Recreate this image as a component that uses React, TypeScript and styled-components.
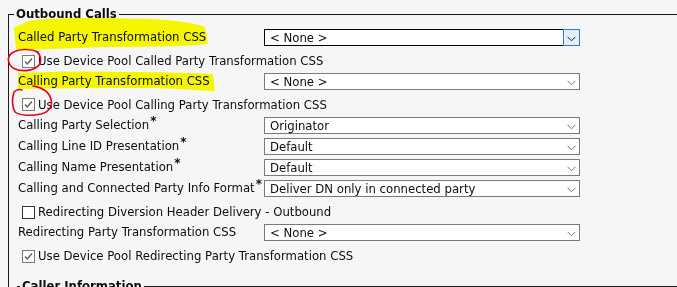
import styled, { createGlobalStyle } from "styled-components";

const Global = createGlobalStyle`
	html, body {
		margin: 0;
		background: #f6f6f6;
		overflow: hidden;
	}
	body {
		font-family: "DejaVu Sans", Verdana, sans-serif;
		font-size: 11.7px;
		color: #0d0d0d;
	}
`;

const Page = styled.div`
	position: relative;
	height: 287px;
	padding-top: 7px;
	box-sizing: border-box;
	overflow: hidden;
`;

const Fieldset = styled.fieldset`
	margin: 0 0 0 8px;
	width: 780px;
	border: none;
	border-top: 1px solid #1a1a1a;
	border-left: 1px solid #1a1a1a;
	padding: 0 0 0 9px;
`;

const Legend = styled.legend`
	margin-left: -4px;
	padding: 0 2px;
	font-weight: bold;
	line-height: 14px;
	font-size: 11.7px;
`;

const Rows = styled.div`
	padding-top: 6px;
`;

const SelectRow = styled.div`
	display: flex;
	align-items: center;
	height: 21px;
`;

const Label = styled.span`
	flex: none;
	width: 246px;
	margin-top: -2px;
	white-space: nowrap;
`;

const Req = styled.span`
	position: relative;
	top: -4px;
	margin-left: 1px;
	font-weight: bold;
	font-size: 12px;
`;

const Select = styled.div<{ $focused?: boolean }>`
	flex: none;
	display: flex;
	align-items: center;
	width: 316px;
	height: 17px;
	box-sizing: border-box;
	border: 1px solid ${(p) => (p.$focused ? "#000" : "#7a7a7a")};
	background: #fff;
	padding-left: 5px;
`;

const Value = styled.span`
	flex: 1;
	white-space: nowrap;
`;

const Arrow = styled.span<{ $focused?: boolean }>`
	flex: none;
	display: flex;
	align-items: center;
	justify-content: center;
	box-sizing: border-box;
	width: ${(p) => (p.$focused ? "17px" : "15px")};
	height: ${(p) => (p.$focused ? "17px" : "15px")};
	margin-right: ${(p) => (p.$focused ? "-1px" : "0")};
	padding-top: 2px;
	border: ${(p) => (p.$focused ? "1px solid #2b7bd0" : "none")};
	background: ${(p) => (p.$focused ? "#e3effa" : "transparent")};
	color: ${(p) => (p.$focused ? "#222" : "#777")};
`;

const CheckRow = styled.div<{ $h: number; $top: number }>`
	display: flex;
	align-items: center;
	gap: 3px;
	box-sizing: border-box;
	height: ${(p) => p.$h}px;
	padding: ${(p) => p.$top}px 0 0 4px;
	white-space: nowrap;
`;

const Box = styled.span<{ $checked?: boolean }>`
	flex: none;
	display: flex;
	align-items: center;
	justify-content: center;
	width: 13px;
	height: 13px;
	box-sizing: border-box;
	border: 1px solid ${(p) => (p.$checked ? "#7a7a7a" : "#333")};
	background: #fff;
`;

const Inner = styled.fieldset`
	margin: 10px 0 0 -1px;
	border: none;
	border-top: 1px solid #1a1a1a;
	border-left: 1px solid #1a1a1a;
	padding: 0 0 0 6px;
	height: 40px;
`;

const Marks = styled.svg`
	position: absolute;
	left: 0;
	top: 0;
	pointer-events: none;
`;

function Chevron() {
	return (
		<svg width="9" height="6" viewBox="0 0 9 6">
			<path d="M0.5 0.8 L4.5 4.8 L8.5 0.8" fill="none" stroke="currentColor" strokeWidth="1" />
		</svg>
	);
}

function Dropdown({ value, focused }: { value: string; focused?: boolean }) {
	return (
		<Select $focused={focused}>
			<Value>{value}</Value>
			<Arrow $focused={focused}>
				<Chevron />
			</Arrow>
		</Select>
	);
}

function Check({ checked, label, h, top }: { checked?: boolean; label: string; h: number; top: number }) {
	return (
		<CheckRow $h={h} $top={top}>
			<Box $checked={checked}>
				{checked && (
					<svg width="11" height="11" viewBox="0 0 11 11">
						<path d="M2 5.5 L4.3 8 L9 2.5" fill="none" stroke="#5f5f5f" strokeWidth="1.4" />
					</svg>
				)}
			</Box>
			<span>{label}</span>
		</CheckRow>
	);
}

export default function App() {
	return (
		<Page>
			<Global />
			<Fieldset>
				<Legend>Outbound Calls</Legend>
				<Rows>
					<SelectRow>
						<Label>Called Party Transformation CSS</Label>
						<Dropdown value="< None >" focused />
					</SelectRow>
					<Check checked h={23} top={3} label="Use Device Pool Called Party Transformation CSS" />
					<SelectRow>
						<Label>Calling Party Transformation CSS</Label>
						<Dropdown value="< None >" />
					</SelectRow>
					<Check checked h={23} top={2} label="Use Device Pool Calling Party Transformation CSS" />
					<SelectRow>
						<Label>
							Calling Party Selection<Req>*</Req>
						</Label>
						<Dropdown value="Originator" />
					</SelectRow>
					<SelectRow>
						<Label>
							Calling Line ID Presentation<Req>*</Req>
						</Label>
						<Dropdown value="Default" />
					</SelectRow>
					<SelectRow>
						<Label>
							Calling Name Presentation<Req>*</Req>
						</Label>
						<Dropdown value="Default" />
					</SelectRow>
					<SelectRow>
						<Label>
							Calling and Connected Party Info Format<Req>*</Req>
						</Label>
						<Dropdown value="Deliver DN only in connected party" />
					</SelectRow>
					<Check h={23} top={3} label="Redirecting Diversion Header Delivery - Outbound" />
					<SelectRow>
						<Label>Redirecting Party Transformation CSS</Label>
						<Dropdown value="< None >" />
					</SelectRow>
					<Check checked h={26} top={0} label="Use Device Pool Redirecting Party Transformation CSS" />
					<Inner>
						<Legend>Caller Information</Legend>
					</Inner>
				</Rows>
			</Fieldset>
			<Marks width="677" height="287" viewBox="0 0 677 287">
				<g style={{ mixBlendMode: "multiply" }} fill="#ffff00">
					<path d="M14 28 C20 24 28 21 34 20 C70 17 110 18 150 19 C175 20 195 23 205 27 L208 44 C190 46 150 47 110 47 C70 48 40 50 16 49 Z" />
					<path d="M18 73 C40 72 80 71 120 72 C160 72 195 73 213 74 L215 91 C200 91 180 88 140 88 C100 88 60 88 18 89 Z" />
				</g>
				<g fill="none" stroke="#e3001b" strokeWidth="1.6" strokeLinecap="round">
					<path d="M38 52 C30 48 18 49 12 53 C6 57 8 66 15 69 C22 72 34 71 39 65 C42 61 41 55 37 52" />
					<path d="M33 86 C42 87 49 92 51 99 C53 106 49 112 41 114 C32 116 20 116 15 112 C12 106 12 98 14 92 C16 90 19 89 22 90" />
				</g>
			</Marks>
		</Page>
	);
}
